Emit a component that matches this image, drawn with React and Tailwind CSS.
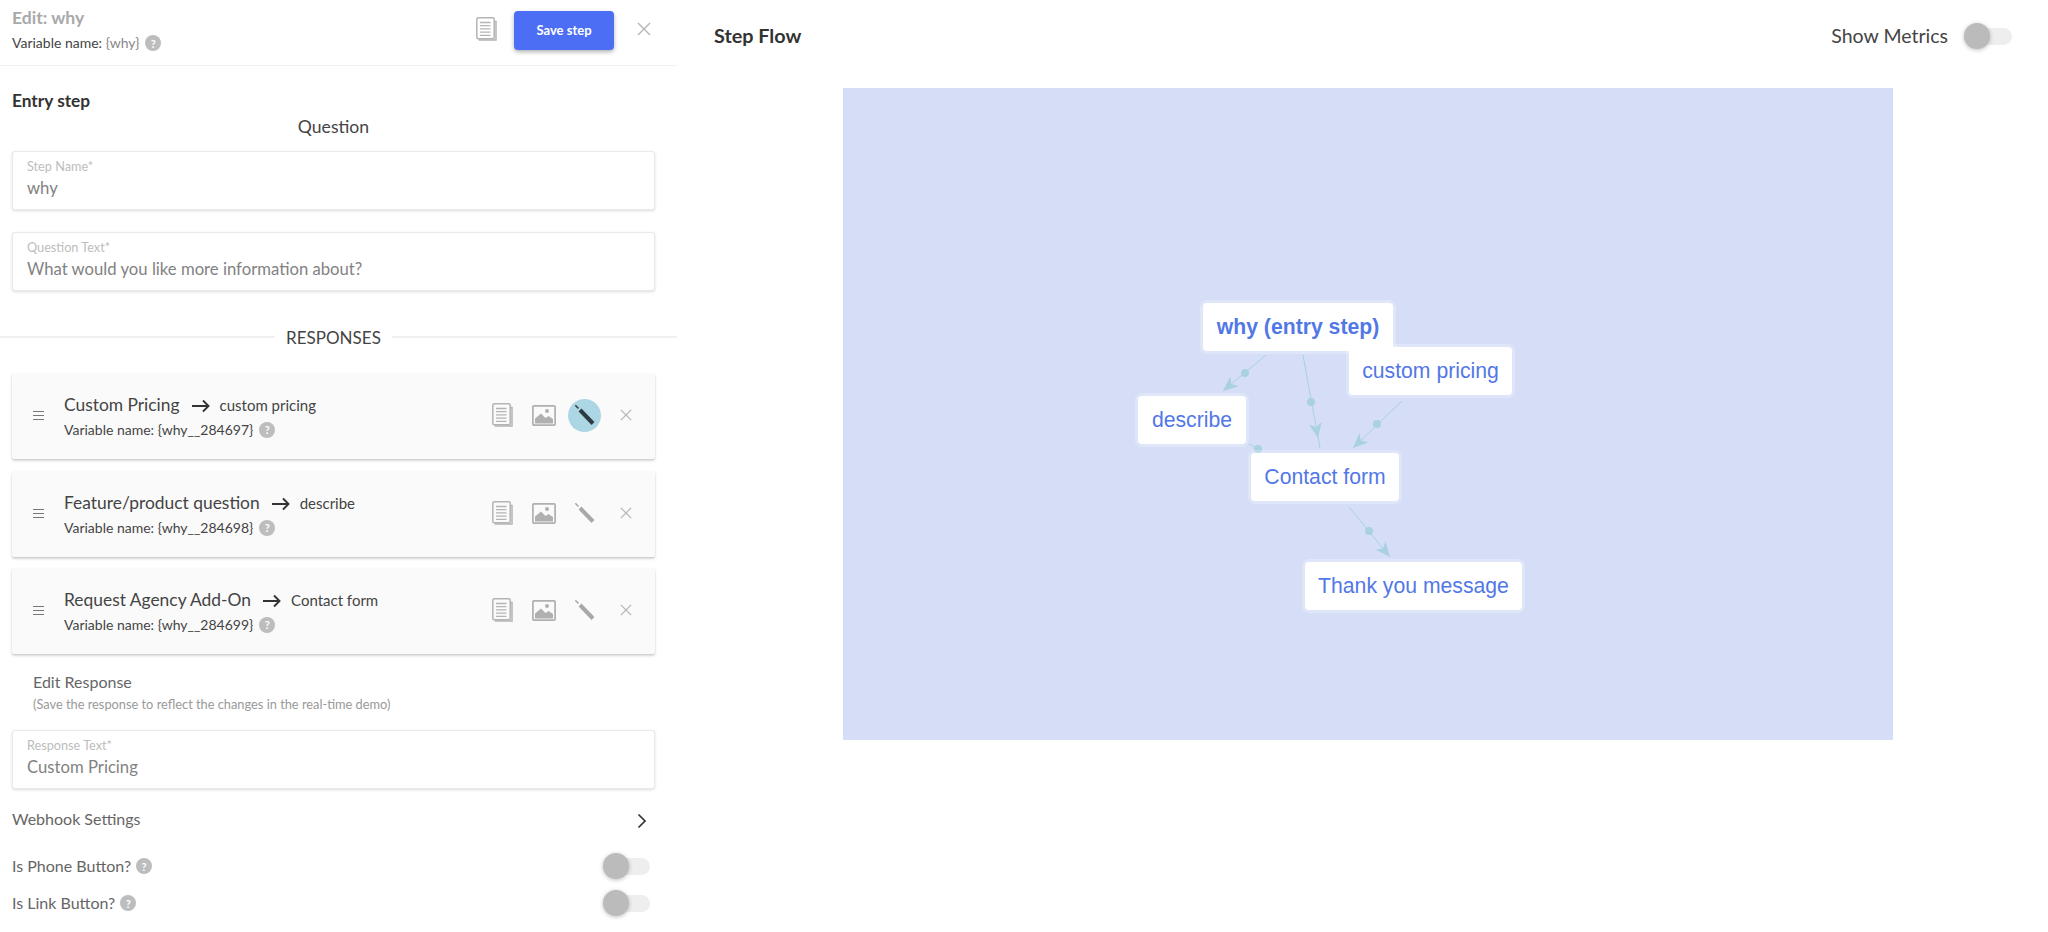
import React from "react";

const Doc = () => (
  <svg width="21" height="24" viewBox="0 0 21 24" className="text-[#b4b4b4] shrink-0" fill="none" stroke="currentColor">
    <path d="M3.5 22v1h16.5V4.5H18.5" strokeWidth="1.5" />
    <rect x="0.8" y="0.8" width="17.4" height="21" rx="1.5" strokeWidth="1.5" />
    <path d="M4 5.5h10.5M4 8.7h10.5M4 11.9h10.5M4 15.1h10.5M4 18.3h10.5" strokeWidth="1.3" />
  </svg>
);
const Pic = () => (
  <svg width="24" height="21" viewBox="0 0 24 21" className="text-[#b0b0b0] shrink-0" fill="none">
    <rect x="0.9" y="0.9" width="22.2" height="19.2" rx="1" stroke="currentColor" strokeWidth="1.7" />
    <circle cx="15" cy="6" r="2" fill="currentColor" />
    <path d="M3 18.5v-5l6-5 4.5 4.5 3-2 4.5 3v4.5z" fill="currentColor" />
  </svg>
);
const Pen = ({ active }) => (
  <svg width="20" height="20" viewBox="0 0 20 20" className={active ? "text-[#2f3a40] shrink-0" : "text-[#a8a8a8] shrink-0"} fill="none" stroke="currentColor" strokeLinecap="round">
    <path d="M5 5L18 18.5" strokeWidth="4" strokeLinecap="butt" />
    <path d="M0.8 0.8L3 3" strokeWidth="1.6" />
  </svg>
);
const X = ({ size = 14 }) => (
  <svg width={size} height={size} viewBox="0 0 14 14" className="text-[#b5b5b5] shrink-0" stroke="currentColor" strokeWidth="1.4" fill="none">
    <path d="M1 1l12 12M13 1L1 13" />
  </svg>
);
const Help = () => (
  <span className="inline-flex items-center justify-center w-[16px] h-[16px] shrink-0 rounded-full bg-[#bdbdbd] text-white text-[11px] font-bold leading-none">?</span>
);
const Arrow = () => (
  <svg width="18" height="14" viewBox="0 0 18 14" fill="none" stroke="#333" strokeWidth="1.9" className="shrink-0">
    <path d="M0 7h16M11 1.5L16.5 7 11 12.5" />
  </svg>
);
const Toggle = () => (
  <div className="relative w-[47px] h-[26px] shrink-0">
    <div className="absolute right-0 top-[5px] w-[40px] h-[17px] rounded-full bg-[#eeeeee]" />
    <div className="absolute left-0 top-0 w-[26px] h-[26px] rounded-full bg-[#bbbbbb] shadow-[0_1px_4px_rgba(0,0,0,0.25)]" />
  </div>
);
const Field = ({ label, value, className = "" }) => (
  <div className={`mx-3 w-[643px] h-[59px] rounded-[3px] border border-[#e9e9ef] bg-white shadow-[0_1px_3px_rgba(0,0,0,0.14)] pl-[14px] pt-[6px] ${className}`}>
    <div className="text-[12.7px] leading-[16px] text-[#bdbdbd]">{label}</div>
    <div className="text-[16.7px] leading-[22px] mt-[3px] text-[#828282]">{value}</div>
  </div>
);
const Card = ({ title, target, id, active, className = "" }) => (
  <div className={`mx-3 w-[643px] h-[86px] flex items-center rounded-[2px] bg-[#fafafa] shadow-[0_1px_2px_rgba(0,0,0,0.12),0_2px_3px_rgba(0,0,0,0.12)] ${className}`}>
    <div className="w-[11px] ml-[21px] flex flex-col gap-[2.5px] shrink-0 -mt-[1px]">
      <div className="h-[1.5px] bg-[#777]" /><div className="h-[1.5px] bg-[#777]" /><div className="h-[1.5px] bg-[#777]" />
    </div>
    <div className="ml-[20px] flex-1">
      <div className="flex items-center h-[26px] mt-[2px]">
        <span className="text-[17.4px] text-[#444]">{title}</span>
        <span className="ml-[12px]"><Arrow /></span>
        <span className="ml-[10px] text-[15px] text-[#444]">{target}</span>
      </div>
      <div className="flex items-center text-[14px] h-[24px] -mt-[1px] text-[#444] gap-[6px]">
        <span>Variable name: {id}</span><Help />
      </div>
    </div>
    <div className="flex items-center shrink-0 mr-[23px] mb-[2px]">
      <span className="w-[41px] flex justify-center"><Doc /></span>
      <span className="w-[41px] flex justify-center"><Pic /></span>
      <span className={`w-[33px] h-[33px] ml-[4px] rounded-full flex items-center justify-center ${active ? "bg-[#add6e4]" : ""}`}><Pen active={active} /></span>
      <span className="ml-[19px]"><X size={12} /></span>
    </div>
  </div>
);
const Node = ({ children, bold, className }) => (
  <div className={`absolute h-[48px] flex items-center justify-center rounded-[4px] bg-white text-[#5277e6] text-[21.2px] shadow-[0_0_0_3px_rgba(255,255,255,0.25)] font-['Liberation_Sans',Arial,sans-serif] ${bold ? "font-bold" : ""} ${className}`}>
    {children}
  </div>
);
const Edge = ({ x1, y1, x2, y2, ax, ay, dx, dy }) => {
  const ang = (Math.atan2(y2 - y1, x2 - x1) * 180) / Math.PI;
  return (
    <g fill="#a9d1e0" stroke="#a9d1e0" strokeWidth="1">
      <line x1={x1} y1={y1} x2={x2} y2={y2} />
      <circle cx={dx} cy={dy} r="4" stroke="none" />
      {ax !== undefined && (
        <path d="M0 0L-15 -6.5L-11 0L-15 6.5Z" stroke="none" transform={`translate(${ax} ${ay}) rotate(${ang})`} />
      )}
    </g>
  );
};

export default function App() {
  return (
    <div className="flex w-[2048px] h-[932px] bg-white overflow-hidden font-['Lato','Open_Sans',sans-serif] text-[#444]">
      <div className="w-[677px] shrink-0 h-full">
        <div className="h-[66px] flex items-start border-b border-[#f2f2f2]">
          <div className="ml-3 flex-1">
            <div className="mt-[7px] text-[17.6px] leading-[22px] font-bold text-[#a9a9a9]">Edit: why</div>
            <div className="mt-[4px] flex items-center gap-[6px] text-[14px] leading-[20px] text-[#444]">
              <span>Variable name: <span className="text-[#888]">{"{why}"}</span></span><Help />
            </div>
          </div>
          <div className="mt-[17px] mr-[17px]"><Doc /></div>
          <button className="mt-[11px] w-[100px] h-[39px] rounded-[4px] bg-[#4c6ef5] text-white text-[13px] font-bold shadow-[0_2px_4px_rgba(0,0,0,0.3)]">Save step</button>
          <div className="mt-[22px] ml-[23px] mr-[26px]"><X /></div>
        </div>
        <div className="ml-3 mt-[24px] text-[17.3px] leading-[22px] font-bold text-[#333]">Entry step</div>
        <div className="w-[667px] text-center mt-[4px] text-[17.6px] leading-[22px] text-[#444]">Question</div>
        <Field label="Step Name*" value="why" className="mt-[13px]" />
        <Field label="Question Text*" value="What would you like more information about?" className="mt-[22px]" />
        <div className="flex items-center mt-[35px] h-[22px]">
          <div className="w-[275px] h-[2px] bg-[#f0f0f0]" />
          <div className="w-[117px] text-center text-[17px] text-[#444] mt-[2px]">RESPONSES</div>
          <div className="flex-1 h-[2px] bg-[#f0f0f0]" />
        </div>
        <Card className="mt-[25px]" title="Custom Pricing" target="custom pricing" id="{why__284697}" active />
        <Card className="mt-[12px]" title="Feature/product question" target="describe" id="{why__284698}" />
        <Card className="mt-[11px]" title="Request Agency Add-On" target="Contact form" id="{why__284699}" />
        <div className="ml-[33px] mt-[18px] text-[16px] leading-[20px] text-[#666]">Edit Response</div>
        <div className="ml-[33px] mt-[2px] text-[12.8px] leading-[20px] text-[#999]">(Save the response to reflect the changes in the real-time demo)</div>
        <Field label="Response Text*" value="Custom Pricing" className="mt-[16px]" />
        <div className="flex items-center justify-between ml-3 w-[636px] mt-[18px] h-[24px]">
          <span className="text-[16px] text-[#666]">Webhook Settings</span>
          <svg width="12" height="16" viewBox="0 0 12 16" fill="none" stroke="#333" strokeWidth="1.7" className="mt-[3px]"><path d="M2.5 1.5L9 8l-6.5 6.5" /></svg>
        </div>
        <div className="flex items-center justify-between ml-3 w-[638px] mt-[22px] h-[26px]">
          <span className="flex items-center gap-[5px] text-[16px] text-[#666]">Is Phone Button? <Help /></span>
          <Toggle />
        </div>
        <div className="flex items-center justify-between ml-3 w-[638px] mt-[11px] h-[26px]">
          <span className="flex items-center gap-[5px] text-[16px] text-[#666]">Is Link Button? <Help /></span>
          <Toggle />
        </div>
      </div>
      <div className="flex-1 h-full">
        <div className="flex items-center justify-between h-[72px] pl-[37px] pr-[36px]">
          <span className="text-[19.8px] font-bold text-[#333]">Step Flow</span>
          <div className="flex items-center gap-[16px]">
            <span className="text-[19.5px] text-[#444]">Show Metrics</span>
            <div className="relative w-[48px] h-[26px]">
              <div className="absolute right-0 top-[5px] w-[40px] h-[17px] rounded-full bg-[#eeeeee]" />
              <div className="absolute left-0 top-0 w-[26px] h-[26px] rounded-full bg-[#bbbbbb] shadow-[0_1px_4px_rgba(0,0,0,0.25)]" />
            </div>
          </div>
        </div>
        <div className="relative ml-[166px] mt-[16px] w-[1050px] h-[652px] bg-[#d6def7] overflow-hidden">
          <svg className="absolute inset-0" width="1050" height="652" viewBox="843 88 1050 652">
            <Edge x1={1266} y1={355} x2={1223} y2={391} ax={1223} ay={391} dx={1245} dy={373} />
            <Edge x1={1303} y1={355} x2={1320} y2={448} ax={1318} ay={438} dx={1311} dy={402} />
            <Edge x1={1402} y1={401} x2={1353} y2={448} ax={1353} ay={448} dx={1377} dy={424} />
            <Edge x1={1249} y1={444} x2={1262} y2={451} dx={1258} dy={449} />
            <Edge x1={1349} y1={507} x2={1390} y2={557} ax={1390} ay={557} dx={1369} dy={531} />
          </svg>
          <Node bold className="left-[360px] top-[215px] w-[190px]">why (entry step)</Node>
          <Node className="left-[506px] top-[259px] w-[163px]">custom pricing</Node>
          <Node className="left-[295px] top-[308px] w-[108px]">describe</Node>
          <Node className="left-[408px] top-[365px] w-[148px]">Contact form</Node>
          <Node className="left-[462px] top-[474px] w-[217px]">Thank you message</Node>
        </div>
      </div>
    </div>
  );
}
